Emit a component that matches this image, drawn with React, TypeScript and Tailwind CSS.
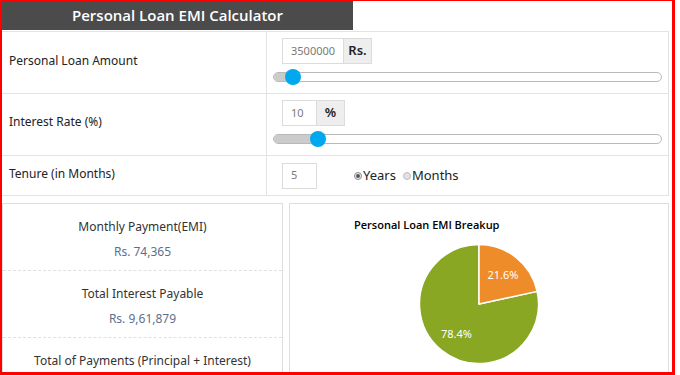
import type { ReactElement } from 'react'

type SliderProps = {
  pct: number
}

function Slider({ pct }: SliderProps): ReactElement {
  return (
    <div className="relative h-[10px] w-full rounded-full border border-[#b9b9b9] bg-white">
      <div
        className="absolute left-0 top-0 h-full rounded-full bg-[#cbcbcb]"
        style={{ width: `${pct}%` }}
      />
      <div
        className="absolute top-1/2 h-[16px] w-[16px] -translate-x-1/2 -translate-y-1/2 rounded-full bg-[#00a9ee]"
        style={{ left: `${pct}%` }}
      />
    </div>
  )
}

type InputGroupProps = {
  value: string
  addon?: string
  width: string
}

function InputGroup({ value, addon, width }: InputGroupProps): ReactElement {
  return (
    <div className="flex h-[26px] ml-[9px]">
      <div
        className={`${width} flex items-center border border-[#dcdcdc] bg-white pl-[8px] text-[11px] text-[#7a7a7a]`}
      >
        {value}
      </div>
      {addon ? (
        <div className="flex w-[28px] items-center justify-center border border-l-0 border-[#dcdcdc] bg-[#eeeeee] text-[13px] font-semibold text-[#222]">
          {addon}
        </div>
      ) : null}
    </div>
  )
}

function Radio({ checked, label }: { checked: boolean; label: string }): ReactElement {
  return (
    <label className="flex items-center">
      <span
        className={
          checked
            ? 'flex h-[8px] w-[8px] items-center justify-center rounded-full border border-[#8a8a8a] bg-[#f2f2f2]'
            : 'h-[8px] w-[8px] rounded-full border border-[#bdbdbd] bg-[#e2e2e2]'
        }
      >
        {checked ? <span className="h-[4px] w-[4px] rounded-full bg-[#555]" /> : null}
      </span>
      <span className="ml-[1px] text-[13px] text-[#222]">{label}</span>
    </label>
  )
}

// the third value sits below the fold in the screenshot
const results: { label: string; value?: string }[] = [
  { label: 'Monthly Payment(EMI)', value: 'Rs. 74,365' },
  { label: 'Total Interest Payable', value: 'Rs. 9,61,879' },
  { label: 'Total of Payments (Principal + Interest)' },
]

export default function App(): ReactElement {
  return (
    <div className="h-[375px] w-[680px] overflow-hidden bg-white">
      <div
        className="h-[375px] w-[675px] overflow-hidden border-b-[3px] border-l-2 border-r-[3px] border-t border-[#ff0000] bg-white text-[#222]"
        style={{ fontFamily: '"Noto Sans", "Open Sans", sans-serif' }}
      >
        <div
          className="flex h-[29px] w-[351px] items-center justify-center bg-[#4b4b4b] text-[15px] font-semibold text-white"
          style={{ fontFamily: '"Open Sans", sans-serif' }}
        >
          Personal Loan EMI Calculator
        </div>

        <div className="mt-[1px] w-[667px] border-b border-r border-t border-[#e3e3e3]">
          <div className="grid h-[62px] grid-cols-[265px_1fr] border-b border-[#e3e3e3]">
            <div className="flex items-center border-r border-[#e3e3e3] pb-[4px] pl-[7px] text-[12px]">
              Personal Loan Amount
            </div>
            <div className="flex flex-col px-[6px] pt-[6px]">
              <InputGroup value="3500000" addon="Rs." width="w-[62px]" />
              <div className="mt-[8px]">
                <Slider pct={5} />
              </div>
            </div>
          </div>

          <div className="grid h-[62px] grid-cols-[265px_1fr] border-b border-[#e3e3e3]">
            <div className="flex items-center border-r border-[#e3e3e3] pb-[5px] pl-[7px] text-[12px]">
              Interest Rate (%)
            </div>
            <div className="flex flex-col px-[6px] pt-[6px]">
              <InputGroup value="10" addon="%" width="w-[35px]" />
              <div className="mt-[8px]">
                <Slider pct={11.4} />
              </div>
            </div>
          </div>

          <div className="grid h-[39px] grid-cols-[265px_1fr]">
            <div className="flex items-center border-r border-[#e3e3e3] pb-[3px] pl-[7px] text-[12px]">
              Tenure (in Months)
            </div>
            <div className="flex items-center px-[6px]">
              <InputGroup value="5" width="w-[35px]" />
              <div className="ml-[37px] flex items-center gap-[7px]">
                <Radio checked label="Years" />
                <Radio checked={false} label="Months" />
              </div>
            </div>
          </div>
        </div>

        <div className="mt-[7px] flex gap-[6px]">
          <div className="h-[200px] w-[281px] border border-[#dedede]">
            {results.map((r) => (
              <div
                key={r.label}
                className="flex h-[67px] flex-col items-center border-b border-dashed border-[#e0e0e0] pt-[14px]"
              >
                <div className="text-[12px] leading-[18px] text-[#333]">{r.label}</div>
                {r.value ? (
                  <div className="mt-[7px] text-[12px] leading-[18px] text-[#5d7090]">{r.value}</div>
                ) : null}
              </div>
            ))}
          </div>

          <div className="h-[200px] w-[380px] border border-[#dedede]">
            <div
              className="pl-[64px] pt-[14px] text-[11px] font-semibold leading-[14px] text-black"
              style={{ fontFamily: '"Open Sans", sans-serif' }}
            >
              Personal Loan EMI Breakup
            </div>
            <svg
              className="ml-[124px] mt-[7px] block"
              width="130"
              height="130"
              viewBox="0 0 130 130"
            >
              <path
                d="M65 65 L123.15 52.39 A59.5 59.5 0 1 1 65 5.5 Z"
                fill="#89a723"
                stroke="#ffffff"
                strokeWidth="1.5"
                strokeLinejoin="round"
              />
              <path
                d="M65 65 L65 5.5 A59.5 59.5 0 0 1 123.15 52.39 Z"
                fill="#ef8c2a"
                stroke="#ffffff"
                strokeWidth="1.5"
                strokeLinejoin="round"
              />
              <text
                x="89"
                y="39.5"
                textAnchor="middle"
                fill="#ffffff"
                fontSize="11"
                fontFamily='"Noto Sans", sans-serif'
              >
                21.6%
              </text>
              <text
                x="42.5"
                y="99"
                textAnchor="middle"
                fill="#ffffff"
                fontSize="11"
                fontFamily='"Noto Sans", sans-serif'
              >
                78.4%
              </text>
            </svg>
          </div>
        </div>
      </div>
    </div>
  )
}
